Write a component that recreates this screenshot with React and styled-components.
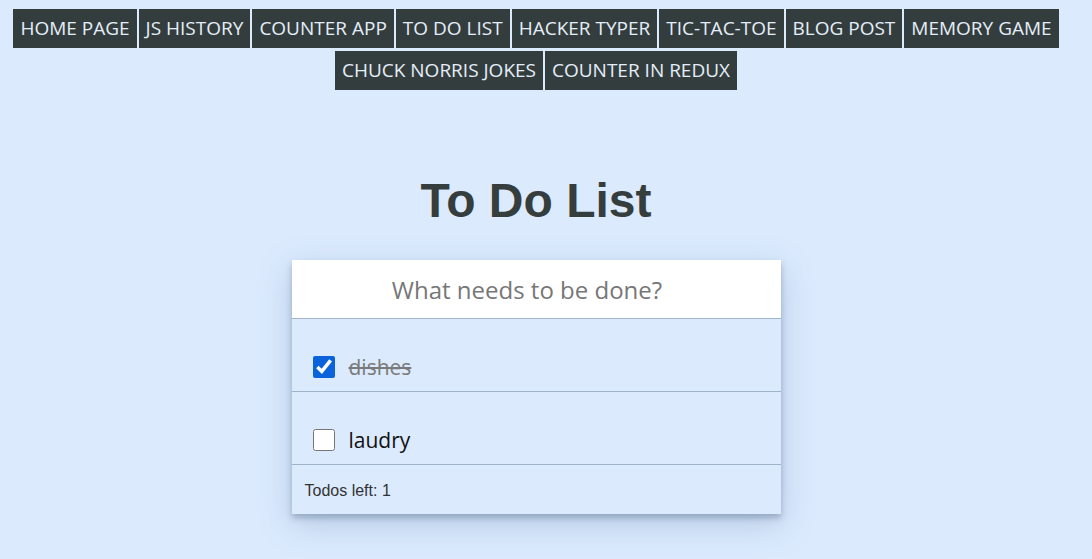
import React, { useState } from 'react';
import styled, { createGlobalStyle } from 'styled-components';

const GlobalStyle = createGlobalStyle`
  html, body {
    margin: 0;
    background: #dbeafd;
    min-height: 100%;
  }
  body {
    padding: 9px 20px 60px 0;
    font-family: 'Open Sans', 'Noto Sans', sans-serif;
  }
`;

const links = [
  'HOME PAGE',
  'JS HISTORY',
  'COUNTER APP',
  'TO DO LIST',
  'HACKER TYPER',
  'TIC-TAC-TOE',
  'BLOG POST',
  'MEMORY GAME',
  'CHUCK NORRIS JOKES',
  'COUNTER IN REDUX',
];

const App = () => {
  const [todos, setTodos] = useState([
    { id: 1, text: 'dishes', done: true },
    { id: 2, text: 'laudry', done: false },
  ]);

  const toggle = (id) =>
    setTodos(todos.map((t) => (t.id === id ? { ...t, done: !t.done } : t)));

  const left = todos.filter((t) => !t.done).length;

  return (
    <Page>
      <GlobalStyle />
      <Nav>
        {links.map((l) => (
          <NavLink key={l} href="#">{l}</NavLink>
        ))}
      </Nav>

      <Title>To Do List</Title>

      <Card>
        <NewTodo placeholder="What needs to be done?" />
        {todos.map((t) => (
          <TodoRow key={t.id}>
            <Check type="checkbox" checked={t.done} onChange={() => toggle(t.id)} />
            <TodoText $done={t.done}>{t.text}</TodoText>
          </TodoRow>
        ))}
        <Footer>Todos left: {left}</Footer>
      </Card>
    </Page>
  );
};

// Styled-components

const Page = styled.div`
  display: flex;
  flex-direction: column;
  align-items: center;
`;

const Nav = styled.nav`
  display: flex;
  flex-wrap: wrap;
  justify-content: center;
  gap: 3px 2px;
  width: 1060px;
`;

const NavLink = styled.a`
  display: block;
  background: #343d3d;
  color: #e4eefa;
  text-decoration: none;
  font-size: 19px;
  line-height: 39px;
  padding: 0 7px;
  white-space: nowrap;
`;

const Title = styled.h1`
  font-family: 'Liberation Sans', Arial, sans-serif;
  font-size: 48px;
  font-weight: bold;
  color: #353d3d;
  margin: 83px 0 31px;
  line-height: 56px;
`;

const Card = styled.div`
  width: 489px;
  background: #dbeafd;
  box-shadow: 0 4px 6px rgba(70, 90, 120, 0.35), 0 10px 30px rgba(110, 140, 180, 0.35);
`;

const NewTodo = styled.input`
  display: block;
  box-sizing: border-box;
  width: 100%;
  height: 59px;
  border: none;
  border-bottom: 1px solid #9fb3cb;
  background: #fff;
  text-align: center;
  padding: 0 18px 0 0;
  font-family: 'Open Sans', 'Noto Sans', sans-serif;
  font-size: 24px;
  color: #333;
  outline: none;

  &::placeholder {
    color: #777;
  }
`;

const TodoRow = styled.label`
  display: flex;
  align-items: center;
  gap: 14px;
  height: 73px;
  box-sizing: border-box;
  padding: 24px 20px 0 21px;
  border-bottom: 1px solid #9fb3cb;
  cursor: pointer;
`;

const Check = styled.input`
  width: 22px;
  height: 22px;
  margin: 0;
  accent-color: #0b63dc;
`;

const TodoText = styled.span`
  font-family: 'Open Sans', 'Noto Sans', sans-serif;
  font-size: 21px;
  color: ${(p) => (p.$done ? '#7a7a7a' : '#111')};
  text-decoration: ${(p) => (p.$done ? 'line-through' : 'none')};
`;

const Footer = styled.div`
  font-family: 'Liberation Sans', Arial, sans-serif;
  font-size: 16px;
  color: #333;
  padding: 17px 13px 14px;
`;

export default App;
